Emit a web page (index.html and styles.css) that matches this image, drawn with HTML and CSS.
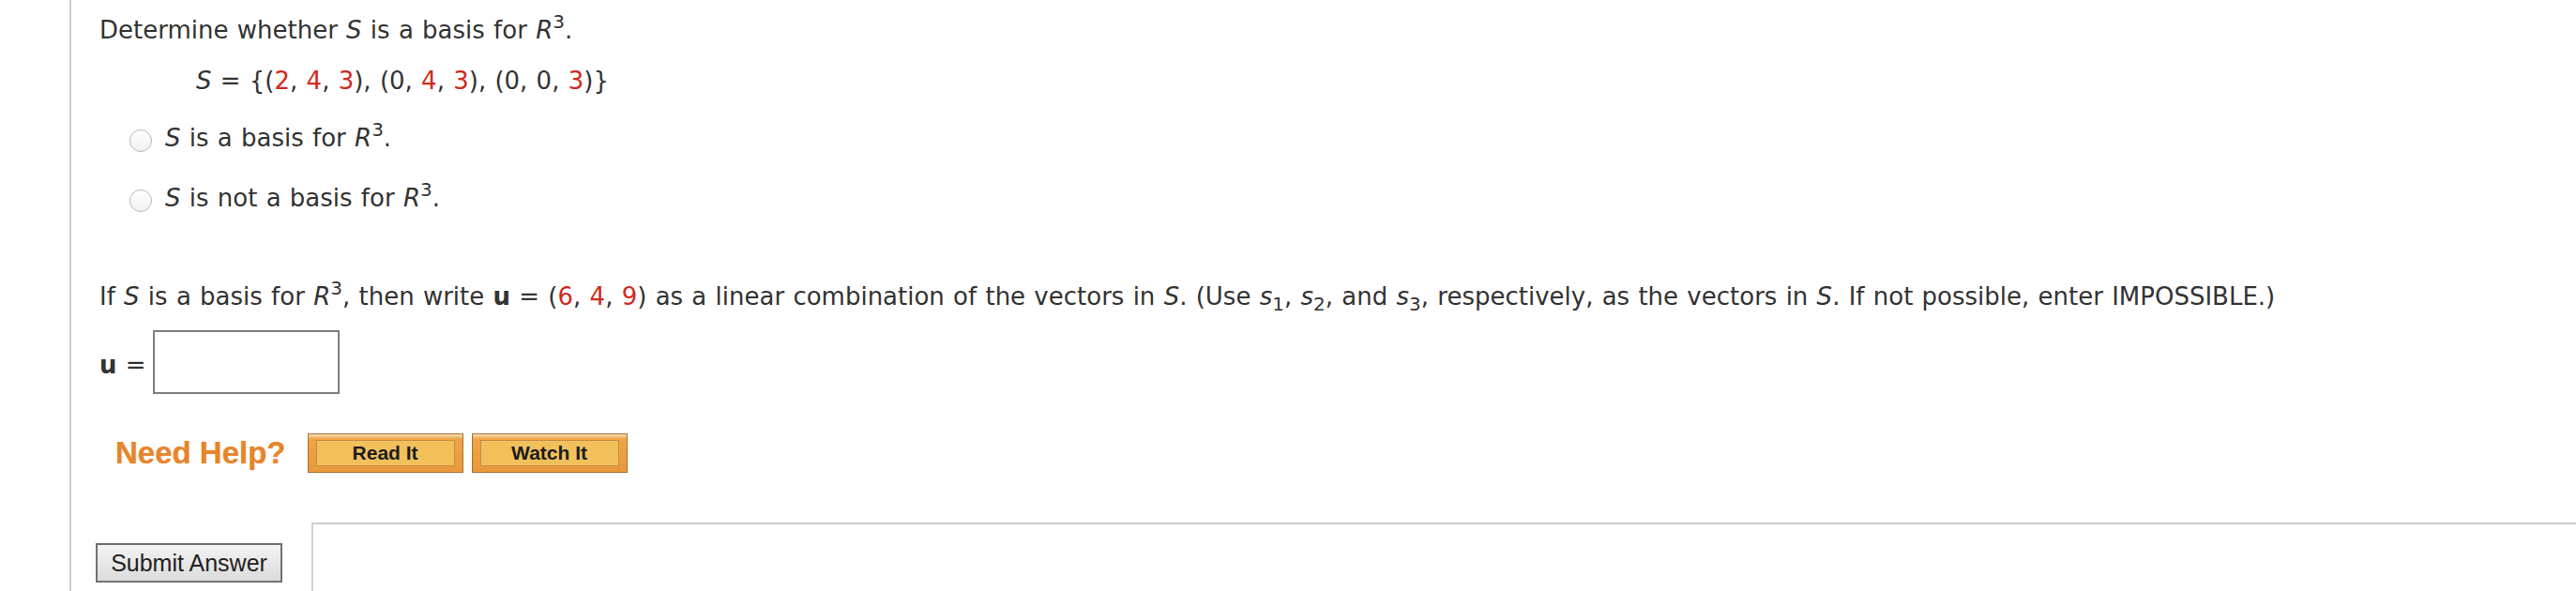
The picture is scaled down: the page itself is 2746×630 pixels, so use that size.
FILE: index.html
```html
<!DOCTYPE html>
<html lang="en">
<head>
  <meta charset="UTF-8">
  <title>Basis for R3</title>
  <link rel="stylesheet" href="styles.css">
</head>
<body>
  <div class="question">
    <p class="prompt">Determine whether <i>S</i> is a basis for <i>R</i><sup>3</sup>.</p>
    <p class="set"><i>S</i> = {(<span class="red">2</span>, <span class="red">4</span>, <span class="red">3</span>), (0, <span class="red">4</span>, <span class="red">3</span>), (0, 0, <span class="red">3</span>)}</p>

    <ul class="choices">
      <li><input type="radio" name="basis"><span><i>S</i> is a basis for <i>R</i><sup>3</sup>.</span></li>
      <li><input type="radio" name="basis"><span><i>S</i> is not a basis for <i>R</i><sup>3</sup>.</span></li>
    </ul>

    <p class="part">If <i>S</i> is a basis for <i>R</i><sup>3</sup>, then write <b>u</b> = (<span class="red">6</span>, <span class="red">4</span>, <span class="red">9</span>) as a linear combination of the vectors in <i>S</i>. (Use <i>s</i><sub>1</sub>, <i>s</i><sub>2</sub>, and <i>s</i><sub>3</sub>, respectively, as the vectors in <i>S</i>. If not possible, enter IMPOSSIBLE.)</p>

    <div class="answer">
      <span class="answer-label"><b>u</b> =</span>
      <input class="answer-box" type="text">
    </div>

    <div class="help">
      <span class="need-help">Need Help?</span>
      <button class="help-btn"><span>Read It</span></button>
      <button class="help-btn"><span>Watch It</span></button>
    </div>

    <div class="submit-row">
      <button class="submit">Submit Answer</button>
      <div class="feedback"></div>
    </div>
  </div>
</body>
</html>
```

FILE: styles.css
```css
html, body {
  margin: 0;
  padding: 0;
  background: #fff;
  overflow: hidden;
}
body {
  font-family: 'DejaVu Sans', Verdana, sans-serif;
  font-size: 26px;
  line-height: 30px;
  word-spacing: 1px;
  color: #333;
}
.question {
  margin-left: 74px;
  border-left: 2px solid #cccccc;
  padding: 17px 0 0 30px;
  min-height: 100vh;
  box-sizing: border-box;
}
.question p {
  margin: 0;
}
.red {
  color: #d12a1f;
}
sup, sub {
  font-size: 20px;
  line-height: 0;
}
sup {
  vertical-align: 11px;
}
sub {
  vertical-align: -6px;
}
.set {
  margin: 24px 0 0 103px !important;
}
.choices {
  list-style: none;
  margin: 31px 0 0;
  padding: 0 0 0 32px;
}
.choices li {
  display: flex;
  align-items: flex-start;
  gap: 14px;
  height: 30px;
  margin-bottom: 34px;
}
.choices li:last-child {
  margin-bottom: 0;
}
.choices input {
  appearance: none;
  -webkit-appearance: none;
  width: 24px;
  height: 24px;
  margin: 6px 0 0;
  border: 1px solid #b9b9b9;
  border-radius: 50%;
  background: linear-gradient(180deg, #ffffff 0%, #f1f1f1 100%);
  box-sizing: border-box;
  flex-shrink: 0;
}
.part {
  margin-top: 75px !important;
}
.answer {
  display: flex;
  align-items: flex-start;
  margin-top: 21px;
}
.answer-label {
  margin-top: 22px;
  width: 57px;
}
.answer-box {
  width: 199px;
  height: 68px;
  box-sizing: border-box;
  border: 2px solid #7d7d7d;
  background: #fff;
  margin: 0;
}
.help {
  display: flex;
  align-items: center;
  height: 42px;
  margin-top: 42px;
  padding-left: 17px;
  word-spacing: normal;
}
.need-help {
  font-family: 'Liberation Sans', Arial, sans-serif;
  font-weight: bold;
  font-size: 33px;
  line-height: 42px;
  color: #e6852c;
  text-shadow: 0 0 1px rgba(230, 133, 44, 0.6);
  margin-right: 23px;
}
.help-btn {
  width: 166px;
  height: 42px;
  margin: 0 9px 0 0;
  padding: 6px 8px;
  border: 1px solid #a86f33;
  background: linear-gradient(180deg, #fbe2b8 0%, #eea547 12%, #e9983c 100%);
  box-sizing: border-box;
  cursor: pointer;
}
.help-btn span {
  display: block;
  height: 100%;
  border: 1px solid #c48c45;
  background: #f2c05b;
  box-sizing: border-box;
  font-family: 'Liberation Sans', Arial, sans-serif;
  font-weight: bold;
  font-size: 21px;
  line-height: 26px;
  color: #1c1c1c;
  text-align: center;
}
.submit-row {
  display: flex;
  align-items: flex-start;
  margin-top: 53px;
  word-spacing: normal;
}
.submit {
  width: 199px;
  height: 42px;
  margin: 22px 31px 0 -4px;
  padding: 0 13px;
  border: 2px solid #707070;
  background: linear-gradient(180deg, #f3f3f3 0%, #dcdcdc 100%);
  font-family: 'Liberation Sans', Arial, sans-serif;
  font-size: 25px;
  color: #222;
  box-sizing: border-box;
  cursor: pointer;
}
.feedback {
  flex: 1;
  height: 73px;
  border-top: 2px solid #cccccc;
  border-left: 2px solid #d2d2d2;
}
```
